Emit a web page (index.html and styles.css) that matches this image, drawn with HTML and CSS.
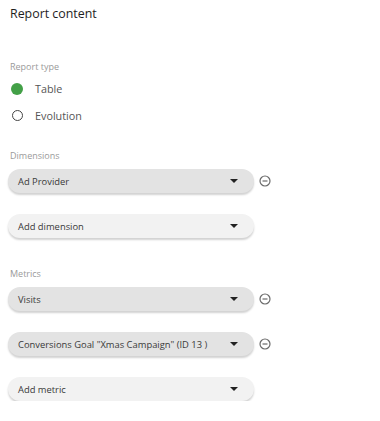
FILE: index.html
```html
<!DOCTYPE html>
<html>
<head>
<meta charset="utf-8">
<link rel="stylesheet" href="styles.css">
</head>
<body>
<div class="panel">
  <h1 class="title">Report content</h1>

  <div class="label label-type">Report type</div>
  <div class="radio-row">
    <span class="radio radio-on"></span><span class="radio-text">Table</span>
  </div>
  <div class="radio-row">
    <span class="radio radio-off"></span><span class="radio-text">Evolution</span>
  </div>

  <div class="label label-section">Dimensions</div>
  <div class="select-row first">
    <div class="pill pill-set"><span class="pill-text">Ad Provider</span><span class="caret"></span></div>
    <svg class="remove" width="12" height="12" viewBox="0 0 12 12"><circle cx="6" cy="6" r="5" fill="none" stroke="#6b6b6b" stroke-width="1.2"/><line x1="3.5" y1="6" x2="8.5" y2="6" stroke="#6b6b6b" stroke-width="1.2"/></svg>
  </div>
  <div class="select-row">
    <div class="pill pill-add"><span class="pill-text">Add dimension</span><span class="caret"></span></div>
  </div>

  <div class="label label-metrics">Metrics</div>
  <div class="select-row first">
    <div class="pill pill-set"><span class="pill-text">Visits</span><span class="caret"></span></div>
    <svg class="remove" width="12" height="12" viewBox="0 0 12 12"><circle cx="6" cy="6" r="5" fill="none" stroke="#6b6b6b" stroke-width="1.2"/><line x1="3.5" y1="6" x2="8.5" y2="6" stroke="#6b6b6b" stroke-width="1.2"/></svg>
  </div>
  <div class="select-row">
    <div class="pill pill-set"><span class="pill-text">Conversions Goal "Xmas Campaign" (ID 13 )</span><span class="caret"></span></div>
    <svg class="remove" width="12" height="12" viewBox="0 0 12 12"><circle cx="6" cy="6" r="5" fill="none" stroke="#6b6b6b" stroke-width="1.2"/><line x1="3.5" y1="6" x2="8.5" y2="6" stroke="#6b6b6b" stroke-width="1.2"/></svg>
  </div>
  <div class="select-row">
    <div class="pill pill-add"><span class="pill-text">Add metric</span><span class="caret"></span></div>
  </div>
</div>
</body>
</html>
```

FILE: styles.css
```css
html, body {
  margin: 0;
  padding: 0;
  background: #ffffff;
}

.panel {
  font-family: "Open Sans", "Noto Sans", "Liberation Sans", sans-serif;
  padding: 0 0 0 8px;
  width: 372px;
}

.title {
  margin: 0;
  padding-left: 2px;
  font-size: 12.4px;
  font-weight: 400;
  line-height: 28px;
  color: #1e1e1e;
}

.label {
  font-size: 9px;
  line-height: 14px;
  color: #9a9a9a;
  padding-left: 2px;
}

.label-type {
  margin-top: 32px;
  margin-bottom: 1px;
}

.label-section {
  margin-top: 20px;
}

.label-metrics {
  margin-top: 29px;
}

.radio-row {
  display: flex;
  align-items: center;
  height: 27px;
  padding-left: 3px;
}

.radio {
  display: block;
  box-sizing: border-box;
  width: 12px;
  height: 12px;
  border-radius: 50%;
}

.radio-on {
  background: #43a047;
}

.radio-off {
  border: 1.3px solid #444444;
  width: 11px;
  height: 11px;
  margin-left: 0.5px;
  margin-right: 0.5px;
}

.radio-text {
  margin-left: 12px;
  font-size: 10.8px;
  color: #555555;
}

.select-row {
  display: flex;
  align-items: center;
  margin-top: 21px;
}

.select-row.first {
  margin-top: 6px;
}

.pill {
  box-sizing: border-box;
  width: 246px;
  height: 24px;
  border-radius: 12px;
  display: flex;
  align-items: center;
  justify-content: space-between;
  padding: 0 16px 0 10px;
  box-shadow: 0 2px 2px rgba(0, 0, 0, 0.18);
}

.pill-set {
  background: #e3e3e3;
}

.pill-add {
  background: #f2f2f2;
}

.pill-text {
  font-size: 9.4px;
  color: #3a3a3a;
  white-space: nowrap;
}

.caret {
  width: 0;
  height: 0;
  border-left: 4px solid transparent;
  border-right: 4px solid transparent;
  border-top: 4px solid #222222;
}

.remove {
  display: block;
  margin-left: 5px;
}
```
